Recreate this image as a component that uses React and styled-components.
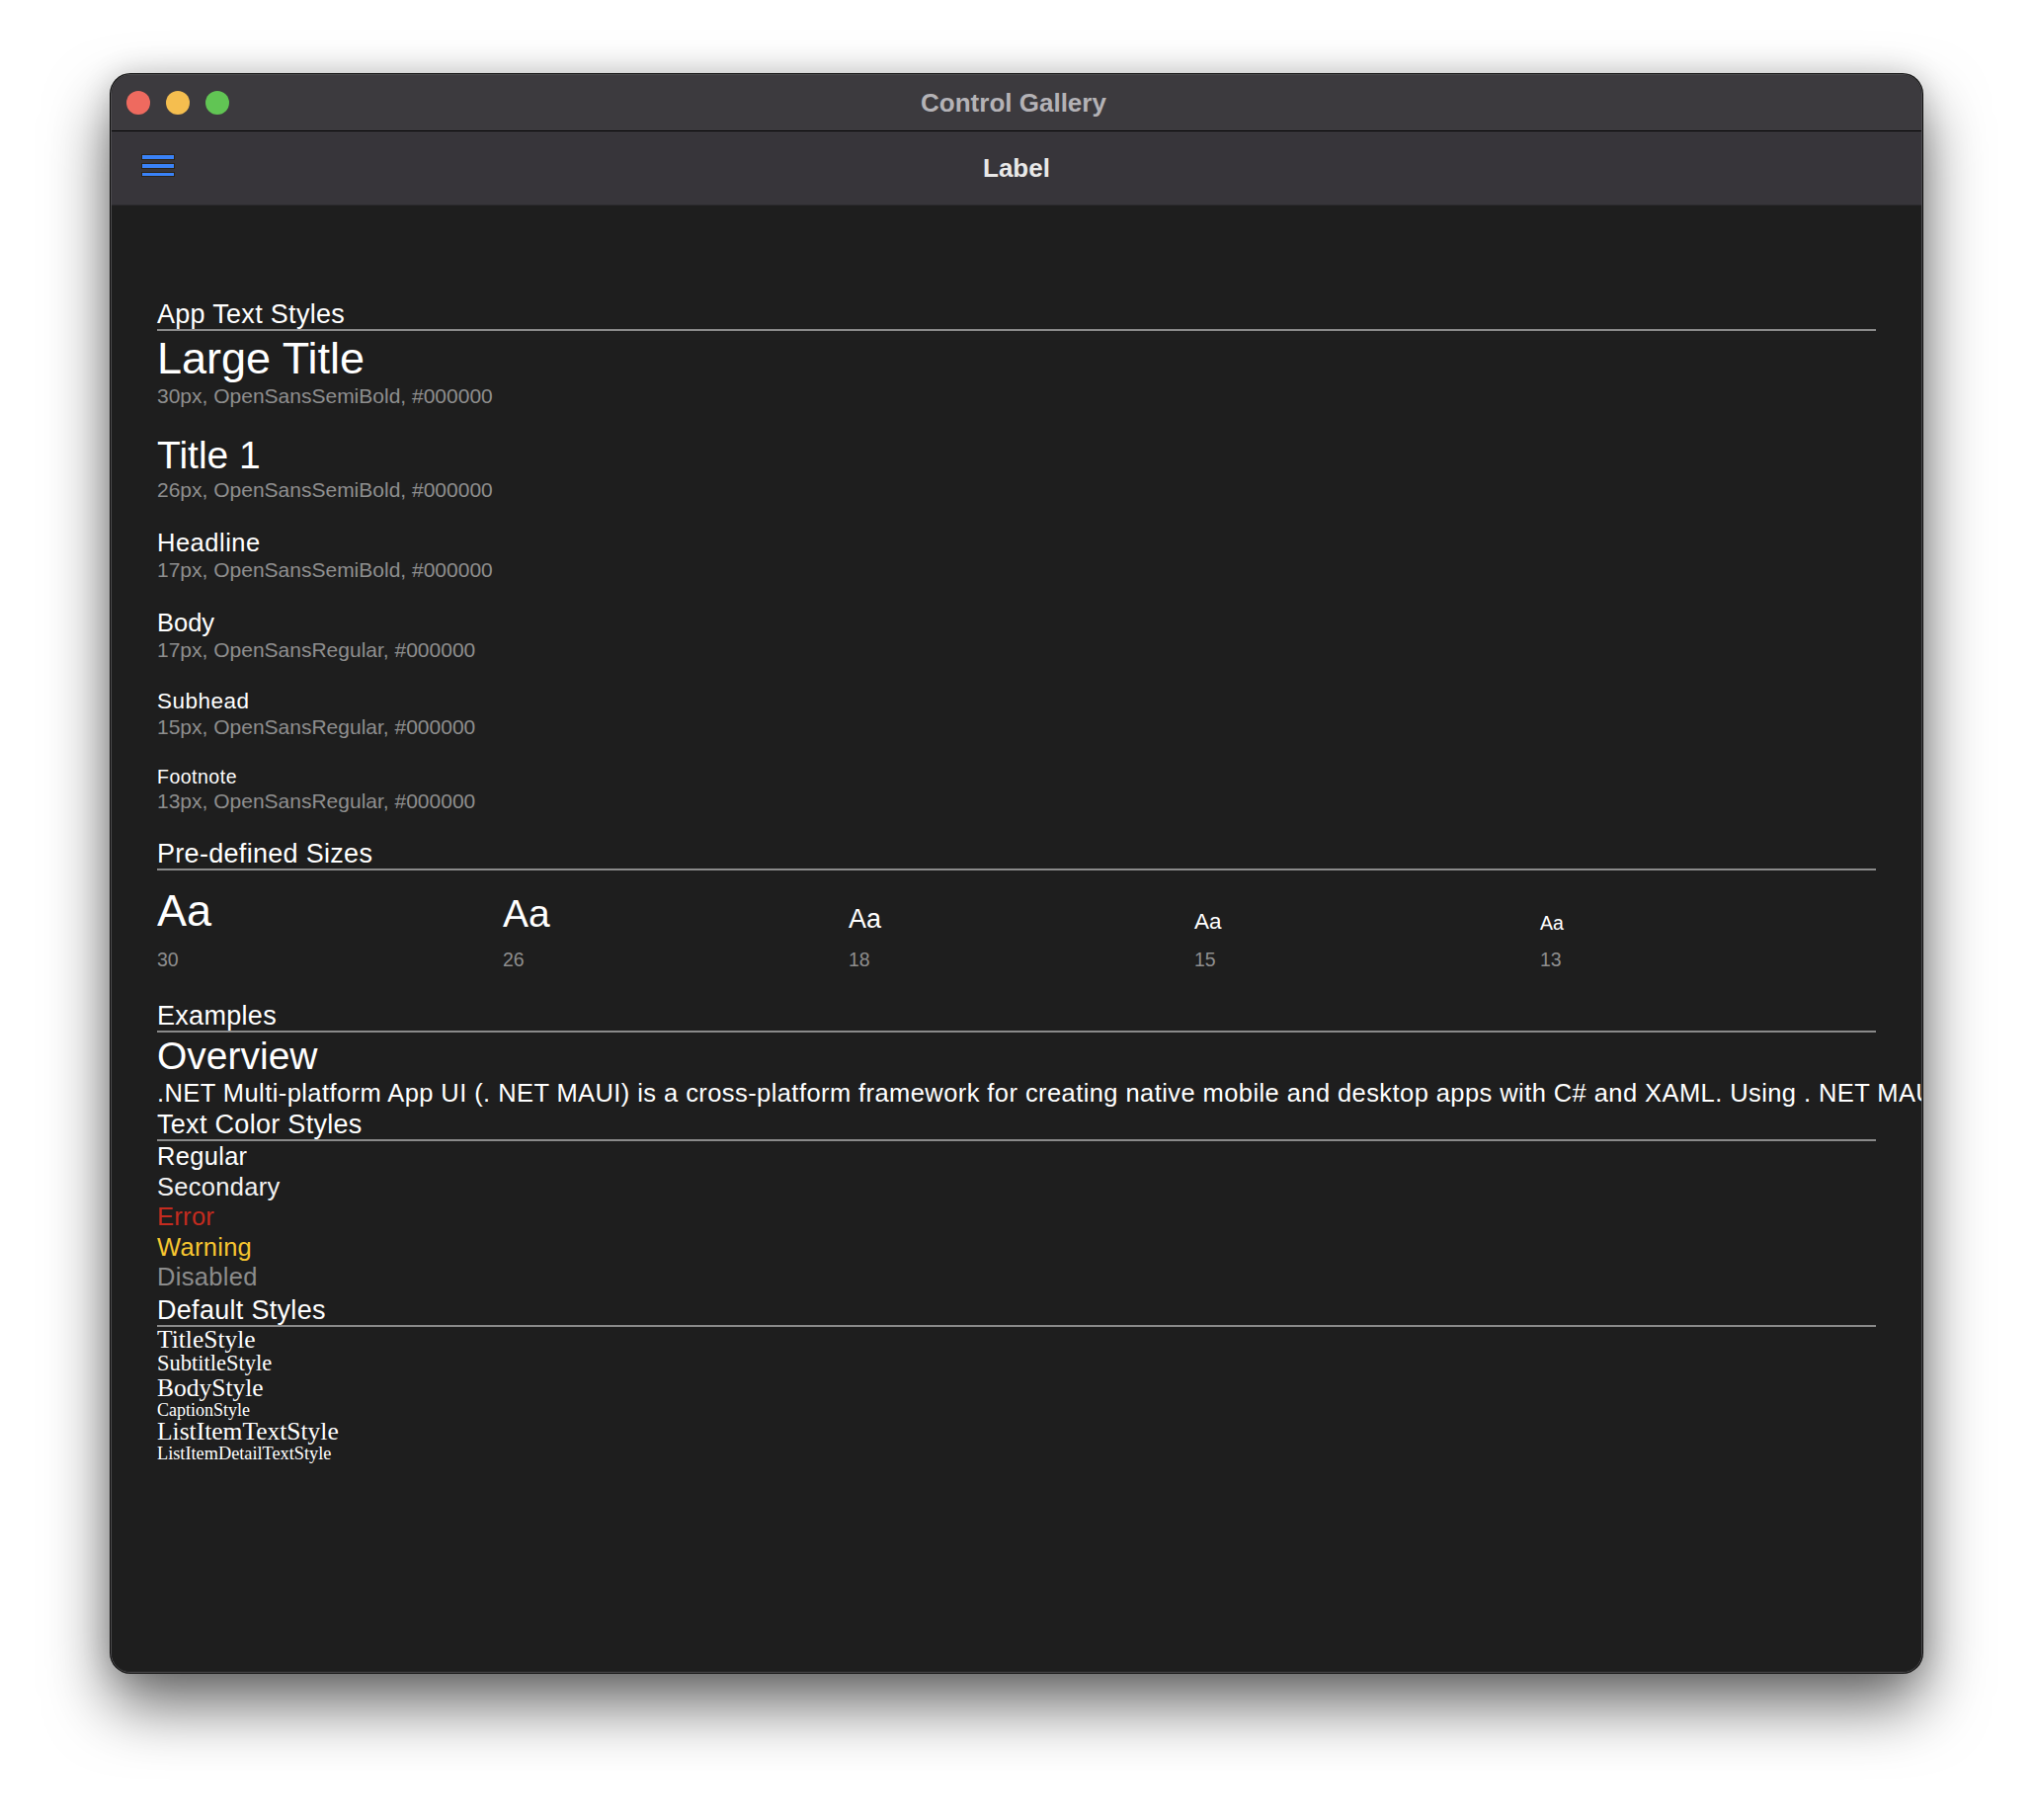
import React from "react";
import styled, { createGlobalStyle } from "styled-components";

const GlobalStyle = createGlobalStyle`
  html, body {
    margin: 0;
    padding: 0;
    background: #ffffff;
  }
  body {
    font-family: "Liberation Sans", Arial, sans-serif;
  }
  * {
    box-sizing: border-box;
  }
`;

const textStyles = [
  { name: "Large Title", size: 45, lh: 50, spec: "30px, OpenSansSemiBold, #000000" },
  { name: "Title 1", size: 39, lh: 44, spec: "26px, OpenSansSemiBold, #000000" },
  { name: "Headline", size: 25.5, lh: 30, spec: "17px, OpenSansSemiBold, #000000", wide: true },
  { name: "Body", size: 25.5, lh: 30, spec: "17px, OpenSansRegular, #000000" },
  { name: "Subhead", size: 22.5, lh: 27, spec: "15px, OpenSansRegular, #000000", wide: true },
  { name: "Footnote", size: 19.5, lh: 24, spec: "13px, OpenSansRegular, #000000", wide: true },
];

const sizes = [
  { size: 45, label: "30" },
  { size: 39, label: "26" },
  { size: 27, label: "18" },
  { size: 22.5, label: "15" },
  { size: 19.5, label: "13" },
];

const colorStyles = [
  { name: "Regular", color: "#ffffff" },
  { name: "Secondary", color: "#f2f2f2" },
  { name: "Error", color: "#c42b1f" },
  { name: "Warning", color: "#f6c530" },
  { name: "Disabled", color: "#8c8c8c" },
];

const defaultStyles = [
  { name: "TitleStyle", size: 25.5 },
  { name: "SubtitleStyle", size: 22.5 },
  { name: "BodyStyle", size: 25.5 },
  { name: "CaptionStyle", size: 18 },
  { name: "ListItemTextStyle", size: 25.5 },
  { name: "ListItemDetailTextStyle", size: 18.3 },
];

export default function App() {
  return (
    <Page>
      <GlobalStyle />
      <Window>
        <TitleBar>
          <Lights>
            <Light color="#ee6a5f" />
            <Light color="#f5be4f" />
            <Light color="#61c554" />
          </Lights>
          <WindowTitle>Control Gallery</WindowTitle>
          <span />
        </TitleBar>
        <Toolbar>
          <MenuButton>
            <svg width="34" height="24" viewBox="0 0 34 24">
              <rect x="0.5" y="1.5" width="33" height="5" fill="#3a82f7" stroke="#2a2418" strokeWidth="1" />
              <rect x="0.5" y="10.5" width="33" height="5" fill="#3a82f7" stroke="#2a2418" strokeWidth="1" />
              <rect x="0.5" y="19.5" width="33" height="4" fill="#3a82f7" stroke="#2a2418" strokeWidth="1" />
            </svg>
          </MenuButton>
          <ToolbarTitle>Label</ToolbarTitle>
          <span />
        </Toolbar>
        <Content>
          <SectionHeader>App Text Styles</SectionHeader>
          {textStyles.map((s, i) => (
            <StyleItem key={s.name} first={i === 0}>
              <StyleName size={s.size} lh={s.lh} wide={s.wide}>{s.name}</StyleName>
              <Spec>{s.spec}</Spec>
            </StyleItem>
          ))}

          <SectionHeader top={25}>Pre-defined Sizes</SectionHeader>
          <SizeGrid>
            {sizes.map((s) => (
              <SizeColumn key={s.label}>
                <SampleBox>
                  <Sample size={s.size}>Aa</Sample>
                </SampleBox>
                <SizeLabel>{s.label}</SizeLabel>
              </SizeColumn>
            ))}
          </SizeGrid>

          <SectionHeader top={30}>Examples</SectionHeader>
          <Overview>Overview</Overview>
          <LongText>
            .NET Multi-platform App UI (. NET MAUI) is a cross-platform framework for creating native mobile and desktop apps with C# and XAML. Using . NET MAUI, you can develop apps that can run on Android, iOS, macOS, and Windows from a single shared code-base.
          </LongText>

          <SectionHeader top={2.5}>Text Color Styles</SectionHeader>
          {colorStyles.map((c) => (
            <ColorLine key={c.name} color={c.color}>{c.name}</ColorLine>
          ))}

          <SectionHeader top={3.5}>Default Styles</SectionHeader>
          {defaultStyles.map((d) => (
            <SerifLine key={d.name} size={d.size}>{d.name}</SerifLine>
          ))}
        </Content>
      </Window>
    </Page>
  );
}

const Page = styled.div`
  width: 2058px;
  height: 1842px;
  padding: 75px 112px 0;
  background: #ffffff;
`;

const Window = styled.div`
  width: 1834px;
  height: 1618px;
  border-radius: 20px;
  overflow: hidden;
  display: flex;
  flex-direction: column;
  background: #1e1e1e;
  border: 1px solid #4e4d50;
  box-shadow: 0 0 0 1px #0c0c0c, 0 32px 64px rgba(0, 0, 0, 0.6),
    0 0 30px rgba(0, 0, 0, 0.16);
`;

const TitleBar = styled.div`
  height: 57px;
  flex-shrink: 0;
  display: grid;
  grid-template-columns: 1fr auto 1fr;
  align-items: center;
  background: #3c3a3e;
  border-bottom: 1px solid #050505;
`;

const Lights = styled.div`
  display: flex;
  gap: 16px;
  padding-left: 15px;
`;

const Light = styled.div`
  width: 24px;
  height: 24px;
  border-radius: 50%;
  background: ${(p) => p.color};
`;

const WindowTitle = styled.div`
  font-size: 26px;
  font-weight: 700;
  color: #b4b2b6;
  margin-left: -6px;
`;

const Toolbar = styled.div`
  height: 75px;
  flex-shrink: 0;
  display: grid;
  grid-template-columns: 1fr auto 1fr;
  align-items: center;
  background: #37353a;
  border-bottom: 1px solid #2b2a2d;
`;

const MenuButton = styled.div`
  padding-left: 30px;
  display: flex;
  align-items: center;
  margin-top: -6px;
`;

const ToolbarTitle = styled.div`
  font-size: 26px;
  font-weight: 700;
  color: #e8e8e8;
`;

const Content = styled.div`
  flex: 1;
  padding: 95px 46px 0;
  background: #1e1e1e;
  color: #ffffff;
`;

const SectionHeader = styled.div`
  margin-top: ${(p) => p.top || 0}px;
  font-size: 27px;
  letter-spacing: 0.3px;
  line-height: 30px;
  color: #ffffff;
  border-bottom: 2px solid #8a8a8a;
`;

const StyleItem = styled.div`
  margin-top: ${(p) => (p.first ? 3 : 25)}px;
`;

const StyleName = styled.div`
  font-size: ${(p) => p.size}px;
  line-height: ${(p) => p.lh}px;
  letter-spacing: ${(p) => (p.wide ? "0.5px" : "0")};
  color: #ffffff;
`;

const Spec = styled.div`
  font-size: 21px;
  line-height: 26px;
  color: #8e8e8e;
`;

const SizeGrid = styled.div`
  margin-top: 11px;
  display: grid;
  grid-template-columns: repeat(5, 350px);
`;

const SizeColumn = styled.div`
  display: flex;
  flex-direction: column;
`;

const SampleBox = styled.div`
  height: 52px;
  display: flex;
  align-items: flex-end;
`;

const Sample = styled.span`
  font-size: ${(p) => p.size}px;
  line-height: 1;
  color: #ffffff;
`;

const SizeLabel = styled.div`
  margin-top: 15px;
  font-size: 19.5px;
  line-height: 24px;
  color: #8e8e8e;
`;

const Overview = styled.div`
  margin-top: 1.5px;
  font-size: 39px;
  line-height: 44px;
`;

const LongText = styled.div`
  font-size: 25.5px;
  line-height: 30px;
  letter-spacing: 0.42px;
  white-space: nowrap;
`;

const ColorLine = styled.div`
  font-size: 25.5px;
  line-height: 30.5px;
  letter-spacing: 0.3px;
  color: ${(p) => p.color};
`;

const SerifLine = styled.div`
  font-family: "Liberation Serif", "Times New Roman", serif;
  font-size: ${(p) => p.size}px;
  line-height: 1.02;
  color: #ffffff;
`;
